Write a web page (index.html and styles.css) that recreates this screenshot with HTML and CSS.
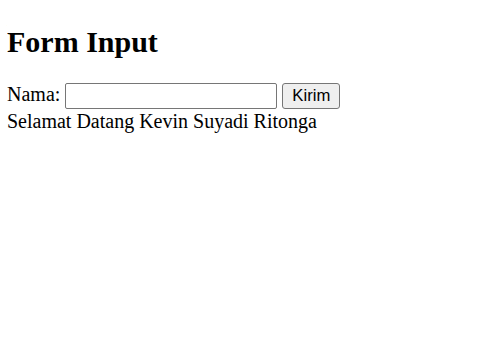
FILE: index.html
```html
<!DOCTYPE html>
<html lang="id">
<head>
    <meta charset="UTF-8">
    <meta name="viewport" content="width=device-width, initial-scale=1.0">
    <title>Form Input</title>
    <link rel="stylesheet" href="styles.css">
</head>
<body>
    <h1>Form Input</h1>
    <form class="form-nama">
        <label for="nama">Nama:</label>
        <input type="text" id="nama" name="nama">
        <button type="submit">Kirim</button>
    </form>
    <div class="sapaan">Selamat Datang Kevin Suyadi Ritonga</div>
</body>
</html>
```

FILE: styles.css
```css
body {
    font-family: 'Liberation Serif', 'Times New Roman', serif;
    font-size: 20px;
    margin: 8px 7px;
}

h1 {
    font-size: 30px;
    margin: 17px 0 24px;
}

.form-nama {
    margin: 0;
}

.form-nama input,
.form-nama button {
    font-family: 'Liberation Sans', Arial, sans-serif;
    font-size: 16.67px;
    box-sizing: border-box;
    height: 26px;
    margin: 0;
}

.form-nama input {
    width: 212px;
    padding: 1px 3px;
    border: 1px solid #767676;
    border-radius: 2px;
}

.form-nama button {
    width: 58px;
    padding: 1px 7px;
    border: 1px solid #767676;
    border-radius: 3px;
    background: #efefef;
    color: #000;
}

.sapaan {
    padding-top: 1px;
}
```
